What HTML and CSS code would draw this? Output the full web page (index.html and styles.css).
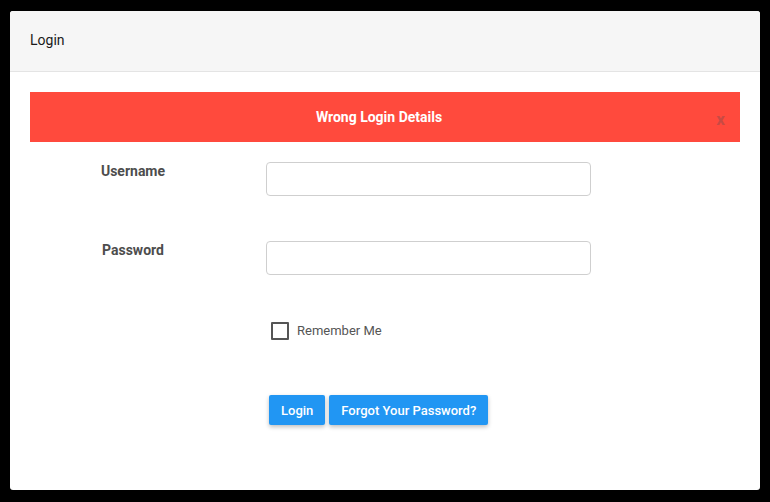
FILE: index.html
```html
<!DOCTYPE html>
<html lang="en">
<head>
  <meta charset="UTF-8" />
  <meta name="viewport" content="width=device-width, initial-scale=1">
  <title>Login</title>
  <link rel="stylesheet" href="styles.css">
</head>
<body>

  <div class="card">
    <div class="card-header">Login</div>

    <div class="card-body">
      <div class="alert">
        Wrong Login Details
        <span class="alert-close">x</span>
      </div>

      <form class="login-form" method="POST" action="/login">
        <div class="form-row">
          <label for="username">Username</label>
          <input type="text" id="username" name="username" autofocus>
        </div>

        <div class="form-row">
          <label for="password">Password</label>
          <input type="password" id="password" name="password">
        </div>

        <div class="form-row remember-row">
          <span></span>
          <label class="remember">
            <span class="box"></span>
            Remember Me
          </label>
        </div>

        <div class="form-row button-row">
          <span></span>
          <div class="button-group">
            <button type="submit" class="btn">Login</button>
            <button type="button" class="btn">Forgot Your Password?</button>
          </div>
        </div>
      </form>
    </div>
  </div>

</body>
</html>
```

FILE: styles.css
```css
* {
  box-sizing: border-box;
  margin: 0;
  padding: 0;
}

body {
  font-family: Roboto, 'Liberation Sans', sans-serif;
  background: #000;
  padding: 11px 10px 12px 10px;
}

.card {
  background: white;
  border-radius: 3px;
  overflow: hidden;
  height: 479px;
}

.card-header {
  background: #f6f6f6;
  height: 61px;
  padding: 0 20px 2px;
  display: flex;
  align-items: center;
  font-size: 14px;
  color: #1a1a1a;
  border-bottom: 1px solid #e4e4e4;
}

.card-body {
  padding: 20px;
}

.alert {
  position: relative;
  background: #ff4a3d;
  color: white;
  height: 50px;
  padding-right: 12px;
  display: flex;
  align-items: center;
  justify-content: center;
  font-size: 14px;
  font-weight: bold;
}

.alert-close {
  position: absolute;
  right: 15px;
  top: 17px;
  color: #c84a44;
  font-size: 17px;
  font-weight: bold;
}

.login-form {
  margin-top: 20px;
}

.form-row {
  display: grid;
  grid-template-columns: 206px 325px;
  column-gap: 30px;
  margin-bottom: 45px;
}

.form-row label {
  text-align: center;
  font-size: 14px;
  font-weight: bold;
  color: #4d4d4d;
  padding-top: 1px;
  line-height: 16px;
}

.form-row input {
  height: 34px;
  border: 1px solid #cfcfcf;
  border-radius: 4px;
  padding: 0 6px;
  font-size: 14px;
  font-family: inherit;
  outline: none;
}

.remember-row {
  margin-top: 2px;
  margin-bottom: 55px;
}

.form-row .remember {
  display: flex;
  align-items: center;
  gap: 8px;
  margin-left: 5px;
  margin-top: 2px;
  font-weight: normal;
  font-size: 13px;
  color: #555;
  padding-top: 0;
  line-height: 18px;
}

.box {
  width: 18px;
  height: 18px;
  border: 2px solid #555;
  border-radius: 1px;
}

.button-group {
  display: flex;
  gap: 4px;
  margin-left: 3px;
}

.btn {
  background: #2196f3;
  color: white;
  border: none;
  border-radius: 2px;
  height: 30px;
  padding: 0 12px;
  font-family: inherit;
  font-size: 13px;
  font-weight: 500;
  box-shadow: 0 2px 4px rgba(0, 0, 0, 0.25);
  cursor: pointer;
}
```
